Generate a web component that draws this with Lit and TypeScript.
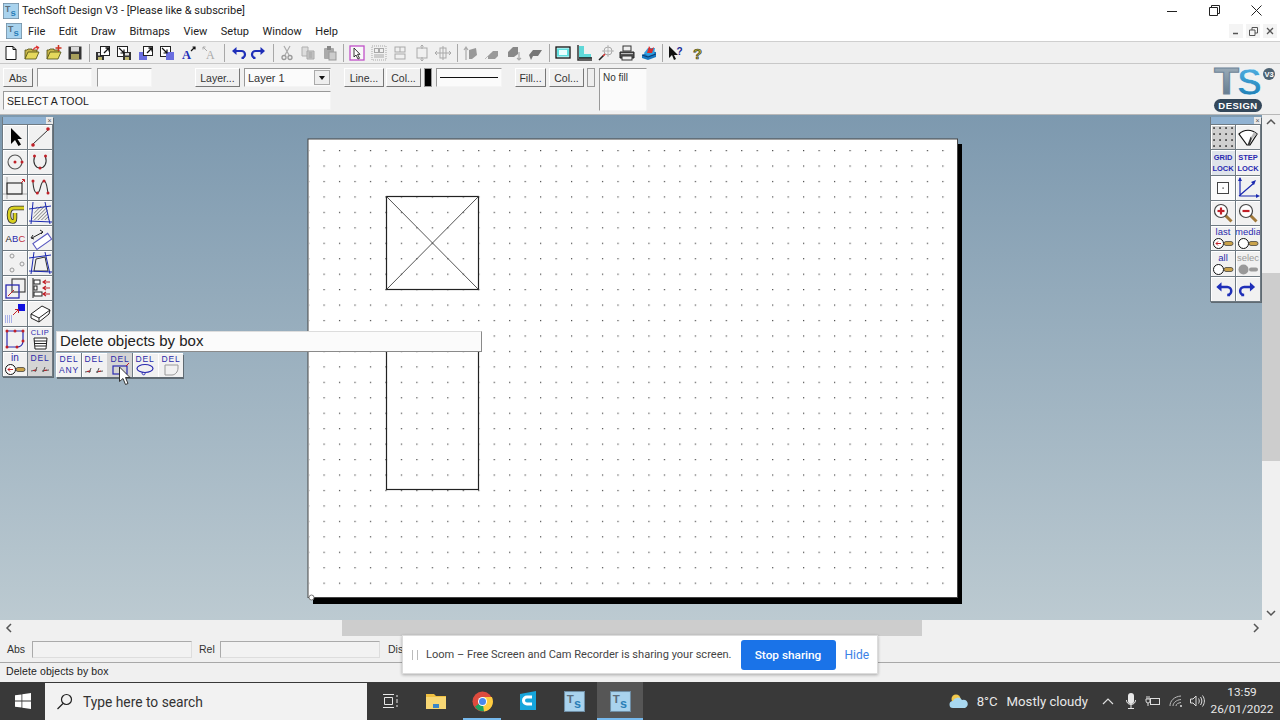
import { LitElement, html, css, svg } from "lit";
import { customElement } from "lit/decorators.js";

const folder = svg`<path d="M1 14V5h2l1-1h4v1h5v2" fill="#c9b64a" stroke="#4a4a10" stroke-width=".8"/><path d="M1 14l3-7h11l-3 7z" fill="#e5d85c" stroke="#4a4a10" stroke-width=".8"/>`;
const floppy = (x: number, y: number, c = "#333") => svg`<rect x="${x}" y="${y}" width="8" height="8" fill="${c}"/><rect x="${x + 2}" y="${y + 1}" width="4" height="2.5" fill="#ddd"/><rect x="${x + 2}" y="${y + 5}" width="4" height="3" fill="#bdb76b"/>`;
const arrowUp = svg`<path d="M9 8l5-5M10.500 3H14v3.500" fill="none" stroke="#111" stroke-width="1.300"/>`;
const undo = (c = "#1f2fb8") => svg`<path d="M14 13h-2.500a3.500 3.500 0 0 0 0-7H4" fill="none" stroke="${c}" stroke-width="2.200"/><path d="M6.500 2L2 6l4.500 4z" fill="${c}"/>`;
const redo = (c = "#1f2fb8") => svg`<g transform="matrix(-1 0 0 1 16 0)">${undo(c)}</g>`;
const g1 = "#a9a9a9";

const top: any = {
  new: svg`<path d="M3 1.500h7l3 3v10H3z" fill="#fff" stroke="#111"/><path d="M10 1.500v3h3" fill="none" stroke="#111"/>`,
  open: svg`${folder}<path d="M9 5c1-2 3-3 5-2.500M12 1l2.500 1.500L13 4.500" fill="none" stroke="#d33" stroke-width="1.300"/>`,
  plus: svg`${folder}<path d="M12.500 0v6M9.500 3h6" stroke="#c32" stroke-width="1.500"/>`,
  save: svg`<rect x="1.500" y="1.500" width="13" height="13" fill="#343434"/><rect x="4" y="2" width="8" height="4.500" fill="#d8d8d8"/><rect x="4" y="9" width="8" height="5.500" fill="#a8a05c"/>`,
  impA: svg`${floppy(1, 7)}<rect x="5.500" y="1.500" width="9" height="9" fill="#fff" stroke="#222"/>${arrowUp}`,
  impB: svg`<rect x="1.500" y="1.500" width="10" height="10" fill="#fff" stroke="#222"/>${floppy(7, 7)}<path d="M3 3l5 5M8 4.500V8H4.500" fill="none" stroke="#111" stroke-width="1.200"/>`,
  expA: svg`<rect x="1" y="7" width="8" height="8" fill="#6a6ee0"/><rect x="5.500" y="1.500" width="9" height="9" fill="#fff" stroke="#222"/>${arrowUp}`,
  expB: svg`<rect x="1.500" y="1.500" width="10" height="10" fill="#fff" stroke="#222"/><rect x="7" y="7" width="8" height="8" fill="#6a6ee0"/><path d="M3 3l5 5M8 4.500V8H4.500" fill="none" stroke="#111" stroke-width="1.200"/>`,
  aOn: svg`<text x="1" y="13.500" font-family="Liberation Serif" font-weight="700" font-size="12.500" fill="#1f2fb8">A</text><path d="M10 6l4-4M11.500 2H14v2.500" fill="none" stroke="#111" stroke-width="1.200"/>`,
  aOff: svg`<text x="4" y="13.500" font-family="Liberation Serif" font-size="12" fill="#aaa">A</text><path d="M5 6L1 2M3.500 2H1v2.500" fill="none" stroke="#aaa"/>`,
  undo: undo(), redo: redo(),
  cut: svg`<path d="M5 1l5 9M11 1L6 10" stroke="#aaa" stroke-width="1.200"/><circle cx="5" cy="12.500" r="2" fill="none" stroke="#999" stroke-width="1.300"/><circle cx="11" cy="12.500" r="2" fill="none" stroke="#999" stroke-width="1.300"/>`,
  copy: svg`<path d="M2 2h6v9H2z" fill="#ddd" stroke="#b0b0b0"/><path d="M7 6h7v8H7z" fill="#ccc" stroke="#a8a8a8"/><path d="M8.500 8h4M8.500 10h4M8.500 12h4" stroke="#999"/>`,
  paste: svg`<rect x="2" y="3" width="10" height="11" fill="#aaa" rx="1"/><rect x="5" y="1" width="4" height="4" fill="#888"/><rect x="7" y="7" width="7" height="8" fill="#ccc" stroke="#999"/>`,
  sel: svg`<rect x="1" y="1" width="14" height="14" fill="#f8f8f8" stroke="#c050c8" stroke-width="1.300"/><path d="M5 3v9l2-2 2 4 1.500-.7-2-4H11z" fill="#fff" stroke="#222" stroke-width=".9"/>`,
  grp: svg`<rect x="1" y="1" width="14" height="14" fill="none" stroke="${g1}" stroke-dasharray="1 1"/><rect x="3.500" y="3.500" width="4" height="4" fill="none" stroke="${g1}"/><rect x="8.500" y="3.500" width="4" height="4" fill="none" stroke="${g1}"/><path d="M3 10h10M3 12h10" stroke="${g1}"/>`,
  ung: svg`<rect x="3" y="2" width="10" height="5" fill="none" stroke="${g1}"/><rect x="3" y="9" width="10" height="5" fill="none" stroke="${g1}"/><path d="M8 2v5" stroke="${g1}"/>`,
  flip: svg`<rect x="3" y="3" width="10" height="10" fill="none" stroke="${g1}"/><path d="M8 0v4M8 12v4M6.500 1.500L8 0l1.500 1.500M6.500 14.500L8 16l1.500-1.500" fill="none" stroke="${g1}"/>`,
  mov: svg`<rect x="5" y="3" width="6" height="10" fill="none" stroke="${g1}"/><path d="M0 8h16M8 1v14M2 6l-2 2 2 2M14 6l2 2-2 2" fill="none" stroke="${g1}"/>`,
  la: svg`<path d="M6 14V5l7-2 1 7-5 4z" fill="#999"/><path d="M3 15V3M1 5l2-3 2 3" fill="none" stroke="#aaa" stroke-width="1.200"/>`,
  lb: svg`<path d="M4 11l5-5h5v5l-3 3H4z" fill="#999"/><path d="M1 14l6-6" stroke="#bbb"/>`,
  lc: svg`<path d="M2 7l5-5h5v7l-4 3H2z" fill="#888"/><path d="M13 15V7M11 13l2 2 2-2" fill="none" stroke="#aaa" stroke-width="1.200"/>`,
  ld: svg`<path d="M2 10l4-5h9l-4 6H6l-2 4z" fill="#777"/>`,
  page: svg`<rect x="1" y="2" width="14" height="11" fill="#dff" stroke="#111" stroke-width="1.300"/><rect x="2" y="3.500" width="12" height="8" fill="#5fe0e0"/><rect x="4" y="5" width="8" height="5" fill="#e8ffff"/>`,
  orig: svg`<path d="M2 0v15h14" fill="none" stroke="#333" stroke-width="1.500"/><rect x="3" y="1" width="5" height="12" fill="#5fd8d8"/><rect x="3" y="9" width="12" height="4" fill="#5fd8d8"/><path d="M3 13h13" stroke="#111" stroke-width="1.500"/>`,
  meas: svg`<path d="M1 15l5-5" stroke="#222" stroke-width="1.600"/><circle cx="10" cy="6" r="4" fill="#f2f2f2" stroke="#aaa"/><path d="M10 0v12M4 6h12" stroke="#aaa" stroke-width=".8"/><path d="M7 9l-2 2" stroke="#d33" stroke-width="1.500"/>`,
  print: svg`<rect x="4" y="1" width="8" height="5" fill="#eee" stroke="#333"/><path d="M1 7h14v6H1z" fill="#555" stroke="#222"/><rect x="3" y="11" width="10" height="4" fill="#eee" stroke="#333"/><path d="M2 8.500h12" stroke="#bbb"/>`,
  box3: svg`<path d="M1 10l7-4 7 1v5l-8 3-6-2z" fill="#1878c0"/><path d="M3 8l4-5h7l-1 6-6 2z" fill="#30a0e0"/><path d="M6 8l2-7 2 3 3-2-2 6z" fill="#d83030"/><path d="M1 10l6 2 8-3" fill="none" stroke="#0b3a70"/>`,
  help: svg`<path d="M1 1v12l3-3 2 5 2-1-2-4h4z" fill="#111"/><text x="8.500" y="10" font-family="Liberation Sans" font-weight="700" font-size="10" fill="#1a2a98">?</text>`,
  tip: svg`<text x="3" y="14" font-family="Liberation Sans" font-weight="700" font-size="15" fill="#b8b020" stroke="#333" stroke-width=".6">?</text>`,
};
const topRow = ["new","open","plus","save","|","impA","impB","expA","expB","aOn","aOff","|","undo","redo","|","cut","copy","paste","|","sel","grp","ung","flip","mov","|","la","lb","lc","ld","|","page","orig","meas","print","box3","|","help","tip"];

const red = "#c02028";
const dot = (x: number, y: number, r = 1.500, c = red) => svg`<circle cx="${x}" cy="${y}" r="${r}" fill="${c}"/>`;
const t = (x: number, y: number, s: string, size = 8, c = "#2a2aa8", extra = "", w = 400) => svg`<text x="${x}" y="${y}" text-anchor="middle" font-family="Liberation Sans" font-size="${size}" font-weight="${w}" fill="${c}" letter-spacing="${extra || 0}">${s}</text>`;
const DEL = t(12, 9, "DEL", 8.500, "#2a2aa8", ".8");
const ring = (c = "#111") => svg`<circle cx="7.500" cy="17.500" r="5" fill="#fff" stroke="${c}"/><rect x="13" y="15.500" width="9" height="4" rx="2" fill="#c9a24a" stroke="#333" stroke-width=".7"/>`;
const delLines = svg`<path d="M3 19l6-1M9 15l-2 5M14 19l7-1M17 15l-2 5" fill="none" stroke="#555"/><path d="M5 18.500l3-.5M16 18.500l3-.5" stroke="${red}"/>`;
const mag = (c: string, plus: boolean) => svg`<path d="M13.500 13.500l7 7" stroke="#a07838" stroke-width="3"/><circle cx="10" cy="10" r="6.500" fill="#fff" stroke="#444" stroke-width="1.200"/><path d="M6.500 10h7" stroke="${c}" stroke-width="2.200"/>${plus ? svg`<path d="M10 6.500v7" stroke="${c}" stroke-width="2.200"/>` : ""}`;

const left: any[] = [
  svg`<path d="M8 3v16l4-4 3.500 6 2.500-1.500-3.500-5.500h4.500z" fill="#000"/>`,
  svg`<path d="M5 19L20 5" stroke="#333"/>${dot(5, 20, 1.800)}${dot(20, 4, 1.800)}`,
  svg`<circle cx="12" cy="12" r="7" fill="none" stroke="#555" stroke-width="1.100"/>${dot(12, 12)}${dot(19, 12)}`,
  svg`<path d="M6.500 7c-2 6 1 11 5.500 11s7.500-5 5.500-11" fill="none" stroke="#333" stroke-width="1.100"/>${dot(6.500, 6)}${dot(12, 18)}${dot(17.500, 6)}`,
  svg`<path d="M4 2v22M0 19h24" stroke="#aaa"/><rect x="4" y="8" width="15" height="11" fill="none" stroke="#222" stroke-width="1.100"/><path d="M18 8l3-3M19 4.500h2.500V7" fill="none" stroke="${red}"/>`,
  svg`<path d="M5 6C5 6 5 18 9.300 18 13 18 12 6 16 6 19 6 19 14 20 18" fill="none" stroke="#333" stroke-width="1.100"/>${dot(5, 6)}${dot(9.300, 18)}${dot(16, 6)}${dot(20, 18)}`,
  svg`<path d="M21 7H11C7 7 6 10 6 14c0 5 2 6.500 4 6.500s2-1.500 2-3.500v-5" fill="none" stroke="#333" stroke-width="4.500"/><path d="M21 7H11C7 7 6 10 6 14c0 5 2 6.500 4 6.500s2-1.500 2-3.500v-5" fill="none" stroke="#d8d020" stroke-width="2.800"/>`,
  svg`<defs><pattern id="h" width="2.500" height="2.500" patternUnits="userSpaceOnUse" patternTransform="rotate(45)"><path d="M0 0v2.500" stroke="#444" stroke-width="1"/></pattern></defs><path d="M8 6l11-2 2 15-17 0z" fill="url(#h)"/><path d="M1 8l22-3M5 1l-2 22M17 1l5 22M1 20l23 1" stroke="#1a28b0" fill="none"/>`,
  svg`<text x="2.500" y="16" font-family="Liberation Sans" font-size="9.500" fill="#222">A</text><text x="9" y="16" font-family="Liberation Sans" font-size="9.500" fill="#2a2ab0">B</text><text x="15.500" y="16" font-family="Liberation Sans" font-size="9.500" fill="#c03040">C</text>`,
  svg`<path d="M4 12l11-6M5 9l-2 3 3 1M12 4l3 2-2 2" fill="none" stroke="#222"/><g transform="rotate(-35 14 15)"><rect x="5" y="12" width="18" height="7" fill="#fff" stroke="#5858c0" stroke-width="1.100"/></g>`,
  svg`<circle cx="9" cy="5" r="2" fill="none" stroke="#999"/><circle cx="9" cy="19" r="2" fill="none" stroke="#999"/><circle cx="19" cy="13" r="2" fill="none" stroke="#999"/>`,
  svg`<path d="M8 8l9-2 3 14H6z" fill="none" stroke="#333"/><path d="M1 7l22-3M6 1L3 23M17 1l5 22M1 20l23 1" stroke="#1a28b0" fill="none"/>`,
  svg`<rect x="9" y="3" width="13" height="13" fill="none" stroke="#333" stroke-width="1.100"/><rect x="3" y="9" width="13" height="13" fill="none" stroke="#2a2ab0" stroke-width="1.300"/><path d="M5 20l6-6" stroke="${red}"/>`,
  svg`<path d="M5 2v20" stroke="#222"/><rect x="6" y="4" width="6" height="4" fill="#fff" stroke="#222"/><rect x="6" y="10" width="3" height="4" fill="#fff" stroke="#222"/><rect x="6" y="16" width="8" height="4" fill="#fff" stroke="#222"/><path d="M22 6h-6M22 12h-6M22 18h-6M18 4l-3 2 3 2M18 10l-3 2 3 2M18 16l-3 2 3 2" fill="none" stroke="${red}" stroke-width="1.100"/>`,
  svg`<rect x="15" y="3" width="7" height="7" fill="#1010e0"/><path d="M10 14l5-5M12 8.500h3.500V12" fill="none" stroke="${red}"/><g stroke="#6070e0" stroke-dasharray="1 1"><path d="M2 15h8M2 17h8M2 19h8M2 21h8"/></g>`,
  svg`<path d="M3 13L14 5l8 4-1 4-10 8-8-4z" fill="#fff" stroke="#222"/><path d="M3 13l8 4 11-8M11 17v4" fill="none" stroke="#222"/>`,
  svg`<path d="M4 4h16v10c0 4-3 6-6 6H4z" fill="none" stroke="#2a2ab0" stroke-width="1.200"/>${dot(4, 4)}${dot(12, 4)}${dot(20, 4)}${dot(20, 14)}${dot(4, 20)}${dot(14, 20)}`,
  svg`${t(12, 8, "CLIP", 7.500, "#2a2ab0", ".5")}<path d="M6 11h13l-1 11H7z" fill="#fff" stroke="#222"/><path d="M6 14h13M6 16.500h13M7 19h11" stroke="#222"/>`,
  svg`${t(12, 9, "in", 10)}${ring()}<path d="M5 17.500h5M7 15.500l-2 2 2 2" fill="none" stroke="${red}"/>`,
  svg`${DEL}${delLines}`,
];
const fly: any[] = [
  svg`${DEL}${t(12, 19.500, "ANY", 8.500, "#2a2aa8", ".8")}`,
  svg`${DEL}${delLines}`,
  svg`${DEL}<rect x="5" y="13" width="14" height="8" fill="none" stroke="#2a2ab0" stroke-width="1.200"/><path d="M18 13l3-3" stroke="${red}"/>`,
  svg`${DEL}<ellipse cx="12" cy="15.500" rx="8" ry="4" fill="none" stroke="#2a2ab0" stroke-width="1.200"/><path d="M10 19c-3 3 3 4 2 1" fill="none" stroke="#2a2ab0"/>`,
  svg`${DEL}<path d="M6 12h13v3c0 4-3 7-6 7H6z" fill="none" stroke="#999"/>`,
];
const right: any[] = [
  svg`<g fill="#111">${[3, 9, 15, 21].flatMap((y) => [3, 9, 15, 21].map((x) => svg`<rect x="${x - .7}" y="${y - .7}" width="1.500" height="1.500"/>`))}</g>`,
  svg`<path d="M3 9c5-5 13-5 18 0l-7 11h-3z" fill="#fff" stroke="#111" stroke-width="1.200"/><path d="M12.500 20l3-8" stroke="#333" stroke-width="2"/><path d="M15 12l3-5 3 2-5 5z" fill="#bbb"/>`,
  svg`${t(12, 10, "GRID", 7.500, "#2a2ab0", "", 700)}${t(12, 21, "LOCK", 7.500, "#2a2ab0", "", 700)}`,
  svg`${t(12, 10, "STEP", 7.500, "#2a2ab0", "", 700)}${t(12, 21, "LOCK", 7.500, "#2a2ab0", "", 700)}`,
  svg`<rect x="6.500" y="6.500" width="11" height="11" fill="#fff" stroke="#444"/><rect x="11.500" y="11.500" width="1.200" height="1.200" fill="#222"/>`,
  svg`<path d="M4 2v18h18M3 20L18 7" fill="none" stroke="#1a28b0" stroke-width="1.200"/><path d="M2 5l2-4 2 4zM20 18l4 2-4 2zM15 6l5-2-2 5z" fill="#1a28b0"/>`,
  mag("#c02028", true),
  mag("#c02028", false),
  svg`${t(12, 9, "last", 9.500)}${ring()}<path d="M5 17.500h5M7 15.500l-2 2 2 2" fill="none" stroke="${red}"/>`,
  svg`${t(12, 9, "media", 9.500, "#2a2ab0")}${ring()}`,
  svg`${t(12, 9, "all", 9.500)}${ring()}`,
  svg`${t(12, 9, "selec", 9.500, "#999")}<circle cx="7.500" cy="17.500" r="5" fill="#999"/><rect x="13" y="15.500" width="9" height="4" rx="2" fill="#999"/>`,
  svg`<g transform="translate(3 3) scale(1.150)">${undo()}</g>`,
  svg`<g transform="translate(3 3) scale(1.150)">${redo()}</g>`,
];
const tsIcon = (s: number) => html`<svg width="${s}" height="${s}" viewBox="0 0 20 20"><rect x=".5" y=".5" width="19" height="19" fill="#a9d3ee" stroke="#6f8ea5"/><text x="2.500" y="11.500" font-family="Liberation Sans" font-weight="700" font-size="11" fill="#5b6d7b">T</text><text x="9.500" y="16.500" font-family="Liberation Sans" font-weight="700" font-size="12" fill="#2b7fb8">s</text></svg>`;

@customElement("app-root")
export class AppRoot extends LitElement {
  static styles = css`
    :host { display:block; width:1280px; height:720px; overflow:hidden; position:relative; font-family:Roboto,sans-serif; color:#111; }
    svg { overflow:visible; }
    .app { display:flex; flex-direction:column; height:720px; }
    .title { height:21px; background:#fff; display:flex; align-items:center; padding-left:3px; font-size:11px; color:#222; flex:none; }
    .title .name { margin-left:3px; white-space:nowrap; }
    .wc { margin-left:auto; display:flex; }
    .wc span { width:42.500px; height:21px; display:flex; align-items:center; justify-content:center; }
    .menu { height:20px; background:#fff; display:flex; align-items:center; padding-left:6px; font-size:11px; flex:none; color:#222; }
    .menu .items { display:flex; margin-left:6px; }
    .menu .items span { margin-right:13.500px; white-space:nowrap; }
    .mdi { margin-left:auto; display:flex; gap:3px; padding-right:3px; }
    .mdi span { width:14px; height:14px; background:#f4f4f4; display:flex; align-items:center; justify-content:center; }
    .tools { height:22px; background:#f0f0f0; display:flex; align-items:center; flex:none; border-top:1px solid #cfcfcf; box-sizing:border-box; }
    .tools .b { width:21.500px; display:flex; justify-content:center; flex:none; }
    .tools .sep { width:6px; height:18px; display:flex; justify-content:center; flex:none; }
    .tools .sep i { width:1px; background:#a8a8a8; }
    .panel { height:52px; background:#f0f0f0; display:flex; flex:none; border-top:1px solid #c8c8c8; border-bottom:1px solid #b8b8b8; box-sizing:border-box; padding:4px 0 0 3px; font-family:"Liberation Sans",sans-serif; font-size:10.500px; color:#333; }
    .lc { width:328px; display:flex; flex-direction:column; gap:4px; flex:none; }
    .r1 { display:flex; height:19px; }
    .btn { height:19px; background:#f0f0f0; border:1px solid; border-color:#fff #777 #777 #fff; box-sizing:border-box; display:flex; align-items:center; justify-content:center; flex:none; }
    .inp { height:19px; background:#fbfbfb; box-sizing:border-box; border:1px solid; border-color:#999 #f4f4f4 #f4f4f4 #999; flex:none; }
    .sel { height:19px; background:#fbfbfb; box-sizing:border-box; border:1px solid; border-color:#999 #f4f4f4 #f4f4f4 #999; display:flex; align-items:center; padding-left:3px; flex:none; font-size:11px; }
    .sel b { margin-left:auto; width:16px; height:15px; background:#eee; border:1px solid #aaa; box-sizing:border-box; display:flex; align-items:center; justify-content:center; }
    .sel b::after { content:""; border:3.500px solid transparent; border-top:4px solid #111; margin-top:4px; }
    .tool { height:19px; background:#fbfbfb; border:1px solid; border-color:#999 #f4f4f4 #f4f4f4 #999; box-sizing:border-box; display:flex; align-items:center; padding-left:3px; color:#222; letter-spacing:.1px; }
    .rc { display:flex; height:19px; margin-left:13px; flex:none; }
    .swatch { width:8px; height:19px; background:#000; border:1px solid #999; box-sizing:border-box; }
    .swatch.e { background:#eee; }
    .lbox { width:66px; height:19px; background:#fbfbfb; border:1px solid; border-color:#999 #f4f4f4 #f4f4f4 #999; box-sizing:border-box; display:flex; align-items:center; padding:0 3px; }
    .lbox i { flex:1; height:1px; background:#111; }
    .nofill { width:48px; height:43px; background:#fbfbfb; border:1px solid; border-color:#999 #f4f4f4 #f4f4f4 #999; box-sizing:border-box; padding:3px; font-size:10px; margin-left:4px; flex:none; }
    .logo { margin-left:auto; margin-top:-1px; margin-right:1px; }
    .main { flex:1; display:flex; min-height:0; }
    .ws { flex:1; position:relative; background:linear-gradient(#7d99af,#bccad1); overflow:hidden; }
    .vs { width:18px; background:#f0f0f0; display:flex; flex-direction:column; align-items:center; flex:none; }
    .vs .thumb { width:18px; height:188px; background:#cdcdcd; margin-top:148px; }
    .vs svg { flex:none; }
    .vs .arr1 { margin-top:4px; } .vs .arr2 { margin-top:auto; margin-bottom:4px; }
    .hs { height:16px; background:#f0f0f0; display:flex; align-items:center; flex:none; position:relative; padding:0 21px 0 6px; }
    .hs .thumb { width:580px; height:16px; background:#cdcdcd; margin-left:330px; }
    .hs .e { margin-left:auto; }
    .st1 { height:26px; background:#f0f0f0; display:flex; align-items:center; flex:none; font-family:"Liberation Sans",sans-serif; font-size:10.500px; color:#333; padding-left:7px; }
    .st1 .in { width:160px; height:17px; border:1px solid; border-color:#aaa #ddd #ddd #aaa; box-sizing:border-box; background:#f2f2f2; flex:none; }
    .st2 { height:20px; background:#f0f0f0; border-top:1px solid #a8a8a8; box-sizing:border-box; display:flex; align-items:center; flex:none; font-family:"Liberation Sans",sans-serif; font-size:10.500px; padding:0 0 3px 6px; color:#222; letter-spacing:.1px; }
    .task { height:38px; background:#393939; display:flex; align-items:center; flex:none; color:#e8e8e8; font-size:13.200px; }
    .start { width:45px; display:flex; justify-content:center; flex:none; }
    .search { width:322px; height:37px; background:#f2f2f2; margin-top:1px; display:flex; align-items:center; flex:none; color:#333; font-size:13.800px; padding-left:11px; box-sizing:border-box; gap:10px; }
    .apps { display:flex; margin-left:0; height:38px; }
    .app-i { width:46px; height:38px; display:flex; align-items:center; justify-content:center; position:relative; flex:none; }
    .app-i.on { background:#565656; }
    .app-i.run::after { content:""; position:absolute; left:4px; right:4px; bottom:0; height:2px; background:#76b9ed; }
    .app-i.on::after { left:0; right:0; }
    .tray { margin-left:auto; display:flex; align-items:center; height:38px; white-space:nowrap; }
    .clock { width:76px; text-align:center; font-size:11.800px; line-height:17px; margin-left:-1px; }
    .paper { position:absolute; left:308px; top:24px; width:654px; height:465px; }
    .pal { position:absolute; background:#6f7a82; padding:0 1px 1px; box-shadow:1px 1px 0 #5f6a72; }
    .pal .strip { height:7px; margin-bottom:1px; background:#90b2d2; position:relative; }
    .pal .strip i { position:absolute; right:-1px; top:0; width:7px; height:7px; background:#e8e8e8; color:#555; font:7px/7px "Liberation Sans"; text-align:center; }
    .grid { display:grid; grid-template-columns:24px 24px; gap:1px; }
    .pal.l .grid { grid-auto-rows:24.200px; }
    .pal.r .grid { grid-auto-rows:24.300px; }
    .pb { background:#f1f1f1; display:flex; align-items:center; justify-content:center; box-shadow:inset 1px 1px 0 #fff; overflow:hidden; }
    .pb.on { background:#d4d4d4; box-shadow:none; }
    .pb.dots { background:#cfcfcf; }
    .pb.lock { background:#dfe4ea; }
    .pb.hi { background:#fbfbfb; }
    .pb svg { display:block; }
    .tip { position:absolute; left:56px; top:216px; width:426px; height:21px; background:#fbfbfb; box-sizing:border-box; border:1px solid #8a8a8a; border-top-color:#ddd; border-left-color:#ddd; display:flex; align-items:center; padding:0 0 2px 3px; font-family:"Liberation Sans",sans-serif; font-size:15px; color:#222; }
    .fly { position:absolute; left:56px; top:238px; display:flex; gap:.5px; box-shadow:1px 2px 0 #5f6a72; background:#6f7a82; }
    .fly .pb { width:25px; height:24px; }
    .cursor { position:absolute; left:118px; top:251px; }
    .loom { position:absolute; left:402px; top:635px; width:476px; height:39px; background:#fff; box-sizing:border-box; border:1px solid #dcdcdc; box-shadow:0 1px 3px rgba(0,0,0,.3); display:flex; align-items:center; padding-left:8px; font-size:11.050px; color:#444; }
    .loom .pause { width:6px; height:10px; border-left:1px solid #bbb; border-right:1px solid #bbb; box-sizing:border-box; margin-right:8px; margin-left:1px; flex:none; }
    .loom .stop { width:95px; height:30px; border-radius:3px; background:#1a73e8; color:#fff; font-weight:500; display:flex; align-items:center; justify-content:center; margin-left:9px; font-size:11.800px; flex:none; }
    .loom .hide { color:#3a82e6; margin-left:9px; font-size:12px; }
    .tx { white-space:nowrap; }
  `;

  private ps(i: any, cls = "") {
    return html`<div class="pb ${cls}"><svg width="24" height="24" viewBox="0 0 24 24">${i}</svg></div>`;
  }

  render() {
    return html`<div class="app">
      <div class="title">${tsIcon(16)}<span class="name">TechSoft Design V3 - [Please like &amp; subscribe]</span>
        <div class="wc">
          <span><svg width="10" height="10"><path d="M0 5.500h10" stroke="#222"/></svg></span>
          <span><svg width="11" height="11"><path d="M.5 2.500h8v8h-8zM2.500 2.500v-2h8v8h-2" fill="none" stroke="#222"/></svg></span>
          <span style="margin-right:2px"><svg width="11" height="11"><path d="M.5.500l10 10M10.500.500l-10 10" stroke="#222"/></svg></span>
        </div>
      </div>
      <div class="menu">${tsIcon(16)}
        <div class="items"><span>File</span><span>Edit</span><span>Draw</span><span>Bitmaps</span><span>View</span><span>Setup</span><span>Window</span><span>Help</span></div>
        <div class="mdi">
          <span><svg width="8" height="8"><path d="M1 6.500h5" stroke="#555" stroke-width="1.500"/></svg></span>
          <span><svg width="9" height="9"><path d="M.5 3h5.500v5.500H.5zM3 3V.5h5.500V6H6" fill="none" stroke="#555"/></svg></span>
          <span><svg width="8" height="8"><path d="M1 1l6 6M7 1L1 7" stroke="#555" stroke-width="1.300"/></svg></span>
        </div>
      </div>
      <div class="tools">${topRow.map((n) => n === "|" ? html`<span class="sep"><i></i></span>` : html`<span class="b"><svg width="16" height="16" viewBox="0 0 16 16">${top[n]}</svg></span>`)}</div>
      <div class="panel">
        <div class="lc">
          <div class="r1">
            <div class="btn" style="width:30px">Abs</div>
            <div class="inp" style="width:55px;margin-left:4px"></div>
            <div class="inp" style="width:55px;margin-left:5px"></div>
            <div class="btn" style="width:45px;margin-left:43px">Layer...</div>
            <div class="sel" style="width:87px;margin-left:4px">Layer 1<b></b></div>
          </div>
          <div class="tool">SELECT A TOOL</div>
        </div>
        <div class="rc">
          <div class="btn" style="width:40px">Line...</div>
          <div class="btn" style="width:35px;margin-left:2px">Col...</div>
          <div class="swatch" style="margin-left:3px"></div>
          <div class="lbox" style="margin-left:4px"><i></i></div>
          <div class="btn" style="width:31px;margin-left:13px">Fill...</div>
          <div class="btn" style="width:35px;margin-left:3px">Col...</div>
          <div class="swatch e" style="margin-left:3px"></div>
        </div>
        <div class="nofill">No fill</div>
        <div class="logo">
          <svg width="66" height="46" viewBox="0 0 66 46">
            <defs><linearGradient id="tg" x1="0" y1="0" x2="0" y2="1"><stop offset="0" stop-color="#a7b6c2"/><stop offset="1" stop-color="#566f84"/></linearGradient>
            <linearGradient id="sg" x1="0" y1="0" x2="0" y2="1"><stop offset="0" stop-color="#59b7e8"/><stop offset="1" stop-color="#1576ad"/></linearGradient></defs>
            <text x="1" y="27" font-family="Liberation Sans" font-weight="700" font-size="36" textLength="25" lengthAdjust="spacingAndGlyphs" fill="url(#tg)" stroke="#6f8599" stroke-width="1">T</text>
            <text x="24" y="27.500" font-family="Liberation Sans" font-weight="700" font-size="36" textLength="25" lengthAdjust="spacingAndGlyphs" fill="url(#sg)" stroke="#fff" stroke-width=".6">S</text>
            <circle cx="56" cy="7" r="6" fill="#4d6272"/><text x="56" y="10" text-anchor="middle" font-family="Liberation Sans" font-weight="700" font-size="7.500" fill="#fff">V3</text>
            <rect x="1" y="32" width="48" height="13" rx="6.500" fill="#33475a"/><text x="25" y="42" text-anchor="middle" font-family="Liberation Sans" font-weight="700" font-size="9.500" letter-spacing=".5" fill="#fff">DESIGN</text>
          </svg>
        </div>
      </div>
      <div class="main">
        <div class="ws">
          <svg class="paper" width="654" height="465" viewBox="0 0 654 465">
            <defs><pattern id="d" x="0" y="11" width="15.470" height="15.450" patternUnits="userSpaceOnUse"><rect x="0" y="0" width="1.200" height="1.200" fill="#444"/></pattern></defs>
            <rect x="5" y="5" width="649" height="460" fill="#000"/>
            <rect x="0" y="0" width="649.500" height="458.500" fill="#fff" stroke="#444"/>
            <rect x="1" y="1" width="648" height="457" fill="url(#d)"/>
            <rect x="78.500" y="57.500" width="92" height="93" fill="none" stroke="#222" stroke-width="1.200"/>
            <path d="M78.500 57.500l92 93M170.500 57.500l-92 93" stroke="#555"/>
            <rect x="78.500" y="200.500" width="92" height="150" fill="none" stroke="#222" stroke-width="1.200"/>
            <circle cx="3.500" cy="458.500" r="2.500" fill="#fff" stroke="#777"/>
          </svg>
          <div class="pal l" style="left:2px;top:2px">
            <div class="strip"><i>×</i></div>
            <div class="grid">${left.map((i, n) => this.ps(i, n === 19 ? "on" : ""))}</div>
          </div>
          <div class="tip">Delete objects by box</div>
          <div class="fly">${fly.map((i, n) => this.ps(i, n === 2 ? "on" : ""))}</div>
          <svg class="cursor" width="14" height="20" viewBox="0 0 14 20"><path d="M1.500 1v14.500l3.500-3 2.500 6 2.500-1-2.500-6h4.500z" fill="#fff" stroke="#333"/></svg>
          <div class="pal r" style="left:1210px;top:2px">
            <div class="strip"><i>×</i></div>
            <div class="grid">${right.map((i, n) => this.ps(i, n === 0 ? "dots" : n === 2 ? "lock" : n === 4 ? "hi" : ""))}</div>
          </div>
        </div>
        <div class="vs">
          <svg class="arr1" width="10" height="6"><path d="M1 5l4-4 4 4" fill="none" stroke="#555" stroke-width="1.500"/></svg>
          <div class="thumb"></div>
          <svg class="arr2" width="10" height="6"><path d="M1 1l4 4 4-4" fill="none" stroke="#555" stroke-width="1.500"/></svg>
        </div>
      </div>
      <div class="hs">
        <svg width="6" height="10"><path d="M5 1L1 5l4 4" fill="none" stroke="#555" stroke-width="1.500"/></svg>
        <div class="thumb"></div>
        <svg class="e" width="6" height="10"><path d="M1 1l4 4-4 4" fill="none" stroke="#555" stroke-width="1.500"/></svg>
      </div>
      <div class="st1">
        <span class="tx" style="width:25px">Abs</span><div class="in"></div>
        <span class="tx" style="margin-left:7px;width:21px">Rel</span><div class="in"></div>
        <span class="tx" style="margin-left:8px">Dis</span>
      </div>
      <div class="st2">Delete objects by box</div>
      <div class="task">
        <div class="start"><svg width="16" height="16" viewBox="0 0 16 16"><path d="M0 2.300l6.500-.9v6.200H0zM7.300 1.300L16 0v7.600H7.300zM0 8.400h6.500v6.200L0 13.700zM7.300 8.400H16V16l-8.700-1.300z" fill="#fff"/></svg></div>
        <div class="search"><svg width="17" height="17" viewBox="0 0 17 17"><circle cx="10.500" cy="6.500" r="5" fill="none" stroke="#222" stroke-width="1.200"/><path d="M7 10.500L1.500 16" stroke="#222" stroke-width="1.300"/></svg><span class="tx">Type here to search</span></div>
        <div class="apps">
          <div class="app-i"><svg width="16" height="14" viewBox="0 0 16 14"><path d="M1 .5h11M1 13.500h11M2.500 3.500h8v7h-8zM15 1v2M15 5v4M15 11v2" fill="none" stroke="#e8e8e8"/></svg></div>
          <div class="app-i"><svg width="20" height="18" viewBox="0 0 20 18"><path d="M0 2h8l2 2h10v13H0z" fill="#f0c040"/><rect y="5" width="20" height="12" fill="#f7d774"/><rect x="7" y="12" width="6" height="4" fill="#3a86c8"/></svg></div>
          <div class="app-i run"><svg width="21" height="21" viewBox="0 0 21 21"><circle cx="10.500" cy="10.500" r="10" fill="#dd4b3e"/><path d="M10.500 10.500L3 15.500A10 10 0 0 0 13 20.200z" fill="#1da462"/><path d="M10.500 6h9.400A10 10 0 0 1 12 20.500L10.500 10.500z" fill="#ffcd40"/><circle cx="10.500" cy="10.500" r="4.500" fill="#fff"/><circle cx="10.500" cy="10.500" r="3.500" fill="#4a88ee"/></svg></div>
          <div class="app-i"><svg width="22" height="22" viewBox="0 0 22 22"><path d="M3 4l16-3v19H3z" fill="#16a5dc"/><path d="M15 7h-5a3.500 3.500 0 0 0 0 7h5" fill="none" stroke="#fff" stroke-width="3"/></svg></div>
          <div class="app-i">${tsIcon(21)}</div>
          <div class="app-i on run">${tsIcon(21)}</div>
        </div>
        <div class="tray">
          <svg width="20" height="15" viewBox="0 0 20 15" style="margin-right:8px"><circle cx="7" cy="5" r="4.500" fill="#f2c94c"/><path d="M4 14a3.500 3.500 0 0 1 0-7 5 5 0 0 1 9-1 4 4 0 0 1 3 8z" fill="#a8d8f0"/></svg>
          <span class="tx" style="margin-right:9px">8°C</span><span class="tx">Mostly cloudy</span>
          <svg width="12" height="8" style="margin-left:14px"><path d="M1 7l5-5 5 5" fill="none" stroke="#ddd" stroke-width="1.200"/></svg>
          <svg width="10" height="16" viewBox="0 0 10 16" style="margin-left:12px"><rect x="2" y="0" width="6" height="11" rx="3" fill="#e8e8e8"/><path d="M.5 7c0 6 9 6 9 0M5 12v3M2 15.500h6" fill="none" stroke="#e8e8e8"/></svg>
          <svg width="15" height="11" viewBox="0 0 15 11" style="margin-left:9px"><rect x="5.500" y="2.500" width="9" height="6" fill="none" stroke="#ddd"/><path d="M2 0v3M4 0v3M1 3h4v2a2 2 0 0 1-4 0zM3 7v3" fill="none" stroke="#ddd"/></svg>
          <svg width="14" height="12" viewBox="0 0 14 12" style="margin-left:9px"><path d="M1 11C1 6 5 1.500 12 1M4 11c0-3 3-6 8-6.500M7 11c0-2 2-3 5-3.500" fill="none" stroke="#bbb"/><circle cx="12" cy="11" r="1" fill="#ddd"/></svg>
          <svg width="15" height="12" viewBox="0 0 15 12" style="margin-left:7px"><path d="M.5 4h2.500l3-3v10L3 8H.5zM8.500 3.500c1 1.500 1 3.500 0 5M10.500 2c1.800 2.500 1.800 5.500 0 8M12.500 .5c2.500 3.500 2.500 7.500 0 11" fill="none" stroke="#ddd"/></svg>
          <div class="clock">13:59<br />26/01/2022</div>
        </div>
      </div>
      <div class="loom"><span class="pause"></span><span class="tx">Loom – Free Screen and Cam Recorder is sharing your screen.</span><span class="stop">Stop sharing</span><span class="hide">Hide</span></div>
    </div>`;
  }
}
